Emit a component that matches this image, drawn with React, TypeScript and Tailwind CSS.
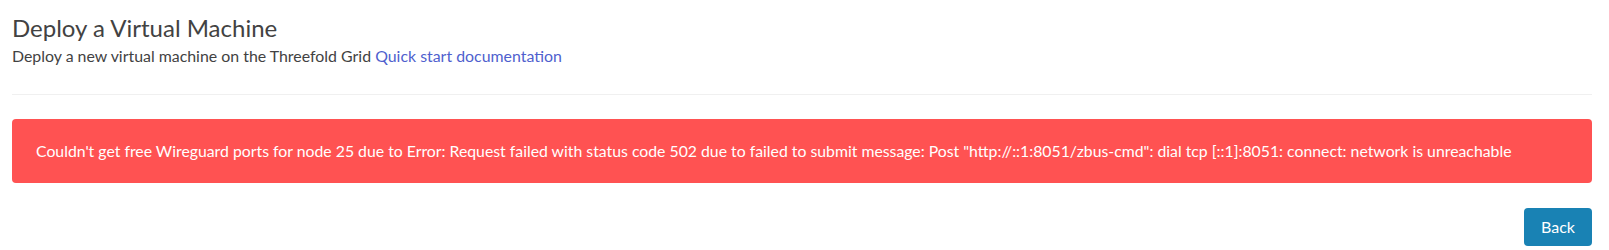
export default function App() {
  return (
    <div className="min-h-[250px] bg-white pl-3 pr-[17px] pt-3 font-['Lato','Liberation_Sans',sans-serif] text-[#424242]">
      <h1 className="text-2xl leading-8 font-normal">Deploy a Virtual Machine</h1>
      <p className="text-[15.9px] leading-6">
        Deploy a new virtual machine on the Threefold Grid{' '}
        <a href="#" className="text-[#4f5fce]">Quick start documentation</a>
      </p>
      <hr className="mt-[26px] border-t border-[#f0f0f0]" />
      <div className="mt-6 flex h-16 items-center rounded bg-[#ff5252] px-6 text-[15.8px] text-white">
        Couldn't get free Wireguard ports for node 25 due to Error: Request failed with status code 502 due to failed to submit message: Post "http://::1:8051/zbus-cmd": dial tcp [::1]:8051: connect: network is unreachable
      </div>
      <div className="mt-[25px] flex justify-end">
        <button className="h-[38px] w-[68px] rounded bg-[#1982b4] text-base text-white">Back</button>
      </div>
    </div>
  )
}
